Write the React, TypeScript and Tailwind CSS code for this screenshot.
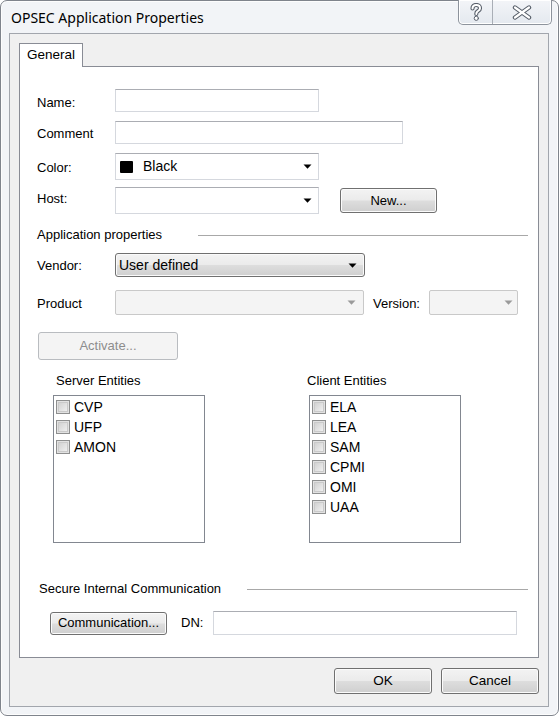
import React from "react";

const btnCls =
  "flex items-center justify-center rounded-[3px] border border-[#707070] bg-[linear-gradient(#f3f3f3_0%,#ebebeb_48%,#dddddd_52%,#cfcfcf_100%)] shadow-[inset_0_0_0_1px_#fbfbfb] text-black";

function Arrow({ color = "#000000" }: { color?: string }) {
  return (
    <svg width="9" height="5" viewBox="0 0 9 5">
      <path d="M0.5 0.5H8.5L4.5 4.8Z" fill={color} />
    </svg>
  );
}

function Check({ label }: { label: string }) {
  return (
    <div className="flex items-center h-[20px]">
      <div className="w-[14px] h-[14px] border border-[#8e8f8f] bg-[#e2e2e2] flex items-center justify-center">
        <div className="w-[10px] h-[10px] bg-[linear-gradient(135deg,#d2d2d2,#efefef)] border border-[#cacaca]" />
      </div>
      <span className="ml-[4px] text-[14px] leading-none">{label}</span>
    </div>
  );
}

function CaptionButtons() {
  return (
    <div className="flex h-[25px] -mt-px -mr-[3px] rounded-b-[5px] border border-t-0 border-[#8d939c] bg-[linear-gradient(#f3f5f8,#e4e9ef)] shadow-[inset_0_0_0_1px_#ffffff] overflow-hidden">
      <div className="w-[34px] flex items-center justify-center border-r border-[#a9aeb6]">
        <svg width="14" height="19" viewBox="0 0 14 19">
          <g fill="none" strokeLinecap="round" strokeLinejoin="round">
            <path
              d="M3.5 5.5C3.5 3 5 2 7.2 2C9.5 2 11 3.3 11 5.2C11 7 9.6 7.6 8.6 8.3C7.7 8.9 7.3 9.5 7.3 11"
              stroke="#59606b"
              strokeWidth="4.2"
            />
            <path
              d="M3.5 5.5C3.5 3 5 2 7.2 2C9.5 2 11 3.3 11 5.2C11 7 9.6 7.6 8.6 8.3C7.7 8.9 7.3 9.5 7.3 11"
              stroke="#ffffff"
              strokeWidth="2"
            />
            <circle cx="7.3" cy="15.3" r="2.1" fill="#ffffff" stroke="#59606b" strokeWidth="1" />
          </g>
        </svg>
      </div>
      <div className="w-[58px] flex items-center justify-center">
        <svg width="20" height="15" viewBox="0 0 20 15">
          <g fill="none" strokeLinecap="round">
            <path d="M3 2.5L17 12.5M17 2.5L3 12.5" stroke="#59606b" strokeWidth="4.4" />
            <path d="M3 2.5L17 12.5M17 2.5L3 12.5" stroke="#ffffff" strokeWidth="2.2" />
          </g>
        </svg>
      </div>
    </div>
  );
}

export default function App() {
  return (
    <div className="w-[559px] h-[716px] bg-white font-['Liberation_Sans',Arial,sans-serif] text-[13px] text-black">
      <div className="w-[559px] h-[716px] flex flex-col rounded-[7px] border border-[#7f848c] bg-[#f2f4f7] shadow-[inset_0_0_0_1px_#fdfdfd] pl-[8px] pr-[9px] pb-[8px]">
        {/* title bar */}
        <div className="h-[32px] flex items-start justify-between">
          <div className="ml-[2px] mt-[7px] font-['Noto_Sans',sans-serif] text-[14px] leading-[20px] text-black">
            OPSEC Application Properties
          </div>
          <CaptionButtons />
        </div>

        {/* client area */}
        <div className="h-[674px] flex flex-col border border-[#a2a6ad] bg-[#f0f0f0] pl-[9px] pr-[9px] pt-[9px]">
          {/* tab header */}
          <div className="h-[23px] flex items-end">
            <div className="relative z-10 w-[64px] h-[24px] -mb-px border border-b-0 border-[#898c95] bg-white flex items-center pl-[7px] text-[13.5px]">
              General
            </div>
          </div>

          {/* tab panel */}
          <div className="h-[592px] flex flex-col border border-[#898c95] bg-white pl-[17px] pr-[10px]">
            {/* Name */}
            <div className="flex items-center mt-[22px] h-[23px]">
              <div className="w-[78px] pt-[4px]">Name:</div>
              <div className="w-[204px] h-[23px] border border-[#d5d8de] border-t-[#abadb3] bg-white" />
            </div>
            {/* Comment */}
            <div className="flex items-center mt-[9px] h-[23px]">
              <div className="w-[78px] pt-[2px]">Comment</div>
              <div className="w-[288px] h-[23px] border border-[#d5d8de] border-t-[#abadb3] bg-white" />
            </div>
            {/* Color */}
            <div className="flex items-center mt-[9px] h-[27px]">
              <div className="w-[78px] pt-[2px]">Color:</div>
              <div className="w-[204px] h-[27px] border border-[#d5d8de] border-t-[#abadb3] bg-white flex items-center pl-[4px] pr-[6px]">
                <div className="w-[13px] h-[12px] bg-black rounded-[1px]" />
                <span className="ml-[10px] text-[14px]">Black</span>
                <div className="flex-1" />
                <Arrow />
              </div>
            </div>
            {/* Host */}
            <div className="flex items-center mt-[7px] h-[27px]">
              <div className="w-[78px] pb-[4px]">Host:</div>
              <div className="w-[204px] h-[27px] border border-[#d5d8de] border-t-[#abadb3] bg-white flex items-center justify-end pr-[6px]">
                <Arrow />
              </div>
              <div className={btnCls + " ml-[21px] w-[97px] h-[25px]"}>New...</div>
            </div>
            {/* Application properties */}
            <div className="flex items-center mt-[13px] h-[16px]">
              <span>Application properties</span>
              <div className="ml-[36px] flex-1 h-px bg-[#a8a8a8]" />
            </div>
            {/* Vendor */}
            <div className="flex items-center mt-[10px] h-[24px]">
              <div className="w-[78px] pt-[1px]">Vendor:</div>
              <div className="w-[250px] h-[24px] rounded-[3px] border border-[#707070] bg-[linear-gradient(#f3f3f3_0%,#ebebeb_48%,#dddddd_52%,#cfcfcf_100%)] shadow-[inset_0_0_0_1px_#fafafa] flex items-center pl-[3px] pr-[7px]">
                <span className="text-[14px]">User defined</span>
                <div className="flex-1" />
                <Arrow />
              </div>
            </div>
            {/* Product / Version */}
            <div className="flex items-center mt-[13px] h-[25px]">
              <div className="w-[78px] pt-[2px]">Product</div>
              <div className="w-[249px] h-[25px] rounded-[2px] border border-[#c9c9c9] bg-[#f4f4f4] flex items-center justify-end pr-[7px]">
                <Arrow color="#9a9a9a" />
              </div>
              <div className="ml-[9px] w-[56px] pt-[2px]">Version:</div>
              <div className="w-[89px] h-[25px] rounded-[2px] border border-[#c9c9c9] bg-[#f4f4f4] flex items-center justify-end pr-[4px]">
                <Arrow color="#9a9a9a" />
              </div>
            </div>
            {/* Activate */}
            <div className="flex mt-[17px] h-[28px] pl-[1px]">
              <div className="w-[140px] h-[28px] rounded-[3px] border border-[#b9bcc0] bg-[#f4f4f4] flex items-center justify-center text-[#8d8d8d]">
                Activate...
              </div>
            </div>
            {/* Entities */}
            <div className="flex mt-[13px] pl-[16px]">
              <div className="flex flex-col w-[152px]">
                <div className="h-[16px] pl-[3px] flex items-center">Server Entities</div>
                <div className="mt-[6px] h-[148px] border border-[#828790] bg-white pl-[2px] pt-[1px]">
                  <Check label="CVP" />
                  <Check label="UFP" />
                  <Check label="AMON" />
                </div>
              </div>
              <div className="flex flex-col w-[152px] ml-[104px]">
                <div className="h-[16px] ml-[-2px] flex items-center">Client Entities</div>
                <div className="mt-[6px] h-[148px] border border-[#828790] bg-white pl-[2px] pt-[1px]">
                  <Check label="ELA" />
                  <Check label="LEA" />
                  <Check label="SAM" />
                  <Check label="CPMI" />
                  <Check label="OMI" />
                  <Check label="UAA" />
                </div>
              </div>
            </div>
            {/* Secure Internal Communication */}
            <div className="flex items-center mt-[38px] h-[16px] pl-[2px]">
              <span>Secure Internal Communication</span>
              <div className="ml-[26px] flex-1 h-px bg-[#a8a8a8]" />
            </div>
            <div className="flex items-center mt-[14px] h-[24px] pl-[13px]">
              <div className={btnCls + " w-[117px] h-[23px]"}>Communication...</div>
              <div className="ml-[14px] w-[32px]">DN:</div>
              <div className="w-[304px] h-[24px] border border-[#d5d8de] border-t-[#abadb3] bg-white" />
            </div>
          </div>

          {/* dialog buttons */}
          <div className="mt-[10px] h-[26px] flex justify-end gap-[9px]">
            <div className={btnCls + " w-[98px] h-[26px] text-[13.5px]"}>OK</div>
            <div className={btnCls + " w-[98px] h-[26px] text-[13.5px]"}>Cancel</div>
          </div>
        </div>
      </div>
    </div>
  );
}
